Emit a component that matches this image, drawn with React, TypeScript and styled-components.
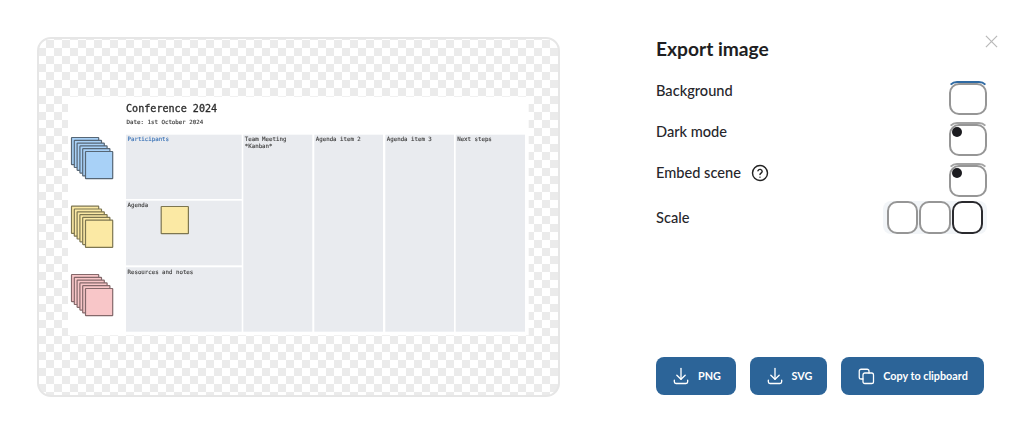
import React from "react";
import styled, { createGlobalStyle } from "styled-components";

const Global = createGlobalStyle`
  html, body { margin: 0; padding: 0; background: #fff; }
  body { font-family: "Lato", "Noto Sans", sans-serif; color: #1b1b1f; }
`;

const Page = styled.div`
  position: relative;
  box-sizing: border-box;
  width: 1024px;
  height: 434px;
  padding: 37px 37px 37px 37px;
  display: flex;
  gap: 96px;
  overflow: hidden;
`;

const Preview = styled.div`
  box-sizing: border-box;
  flex: 0 0 523px;
  height: 360px;
  border: 2px solid #e6e6e6;
  border-radius: 14px;
  overflow: hidden;
  background-color: #fff;
  background-image: conic-gradient(#ebebeb 25%, #fff 25% 50%, #ebebeb 50% 75%, #fff 75%);
  background-size: 16px 16px;
  background-position: -1px 1px;
`;

const Drawing = styled.svg`
  display: block;
  filter: blur(0.4px);
`;

const Panel = styled.section`
  flex: 1;
  display: flex;
  flex-direction: column;
`;

const Title = styled.h2`
  margin: -1px 0 0;
  font-size: 19.2px;
  line-height: 25px;
  font-weight: 700;
  color: #1e1e22;
`;

const Close = styled.button`
  position: absolute;
  top: 35px;
  right: 26px;
  padding: 0;
  border: 0;
  background: none;
  display: flex;
`;

const Options = styled.div`
  display: flex;
  flex-direction: column;
  margin-top: 12px;
  gap: 6px;
`;

const Row = styled.div`
  height: 35px;
  display: flex;
  align-items: center;
  justify-content: space-between;
`;

const ScaleRow = styled(Row)`
  margin-top: 4px;
`;

const Label = styled.span`
  display: flex;
  align-items: center;
  gap: 10px;
  font-size: 14.6px;
  font-weight: 500;
  color: #26262b;
`;

const Toggle = styled.div<{ $on?: boolean }>`
  position: relative;
  box-sizing: border-box;
  width: 38px;
  height: 32px;
  margin-top: 17px;
  border: 2px solid #969696;
  border-radius: 10px;
  background: #fff;

  &::before {
    content: "";
    position: absolute;
    left: -4px;
    right: -4px;
    top: -4px;
    height: 14px;
    border: 2px solid transparent;
    border-top-color: ${(p) => (p.$on ? "#2f6aa3" : "#a3a3a3")};
    border-radius: 10px 10px 0 0;
    box-sizing: border-box;
  }
`;

const Knob = styled.span`
  position: absolute;
  left: 1px;
  top: 1px;
  width: 10px;
  height: 10px;
  border-radius: 50%;
  background: #1b1b1f;
`;

const ScaleGroup = styled.div`
  display: flex;
  gap: 1px;
  padding: 0 4px;
  border-radius: 8px;
  background: #f2f5f8;
`;

const ScaleButton = styled.div<{ $active?: boolean }>`
  box-sizing: border-box;
  width: 31.5px;
  height: 33px;
  border: 2px solid ${(p) => (p.$active ? "#2a2a2e" : "#969696")};
  border-radius: 10px;
  background: #fff;
`;

const Actions = styled.div`
  margin-top: auto;
  padding-bottom: 2.5px;
  display: flex;
  gap: 14px;
`;

const Action = styled.button<{ $w: number; $gap: number }>`
  box-sizing: border-box;
  width: ${(p) => p.$w}px;
  height: 37.5px;
  padding: 0;
  display: flex;
  align-items: center;
  justify-content: center;
  gap: ${(p) => p.$gap}px;
  border: 0;
  border-radius: 8px;
  background: #2c6498;
  color: #fff;
  font-family: inherit;
  font-size: 10.8px;
  font-weight: 700;
`;

const Download = () => (
  <svg width="20" height="20" viewBox="0 0 24 24" fill="none" stroke="#fff" strokeWidth="1.6" strokeLinecap="round" strokeLinejoin="round">
    <path d="M4 17v2a2 2 0 0 0 2 2h12a2 2 0 0 0 2-2v-2" />
    <path d="M7 11l5 5 5-5" />
    <path d="M12 3v13" />
  </svg>
);

const Copy = () => (
  <svg width="18" height="18" viewBox="0 0 24 24" fill="none" stroke="#fff" strokeWidth="1.7" strokeLinecap="round" strokeLinejoin="round">
    <rect x="8" y="8" width="14" height="14" rx="2.5" />
    <path d="M16 8V5.500A2.500 2.500 0 0 0 13.500 3h-8A2.500 2.500 0 0 0 3 5.500v8A2.500 2.500 0 0 0 5.500 16H8" />
  </svg>
);

const Help = () => (
  <svg width="18" height="18" viewBox="0 0 24 24" fill="none" stroke="#222" strokeWidth="1.900" strokeLinecap="round" strokeLinejoin="round">
    <circle cx="12" cy="12" r="10" />
    <path d="M9.300 9a2.900 2.900 0 0 1 5.600 1c0 1.900-2.900 2.400-2.900 4" />
    <path d="M12 17.500v.01" />
  </svg>
);

const X = () => (
  <svg width="13" height="13" viewBox="0 0 14 14" fill="none" stroke="#b9b9b9" strokeWidth="1.300">
    <path d="M1 1l12 12M13 1L1 13" />
  </svg>
);

const stackOffsets = [0, 1, 2, 3, 4, 5];

const Stack = ({ x, y, fill, stroke }: { x: number; y: number; fill: string; stroke: string }) => (
  <g>
    {stackOffsets.map((i) => (
      <rect key={i} x={x + i * 2.8} y={y + i * 2.8} width="27.200" height="27.200" rx="0.500" fill={fill} stroke={stroke} strokeWidth="1.200" />
    ))}
  </g>
);

const panels = [
  { x: 87.5, y: 96.2, w: 115.7, h: 64.3, label: "Participants", color: "#3f76b8" },
  { x: 87.5, y: 162.2, w: 115.7, h: 64.6, label: "Agenda" },
  { x: 87.5, y: 228.8, w: 115.7, h: 64.4, label: "Resources and notes" },
  { x: 204.8, y: 96.2, w: 69, h: 197, label: "Team Meeting", second: "*Kanban*" },
  { x: 275.8, y: 96.2, w: 68.7, h: 197, label: "Agenda item 2" },
  { x: 346.8, y: 96.2, w: 68.7, h: 197, label: "Agenda item 3" },
  { x: 417.2, y: 96.2, w: 69.3, h: 197, label: "Next steps" },
];

const SceneText = styled.text<{ $size: number; $ink: number }>`
  font-family: "DejaVu Sans Mono", "Liberation Mono", monospace;
  font-size: ${(p) => p.$size}px;
  stroke: currentColor;
  stroke-width: ${(p) => p.$ink}px;
`;

export default function App() {
  return (
    <Page>
      <Global />
      <Preview>
        <Drawing width="519" height="356" viewBox="0.5 0.5 519 356">
          <rect x="29.5" y="58.2" width="460.7" height="238.6" fill="#fff" />
          {panels.map((p) => (
            <g key={p.label}>
              <rect x={p.x} y={p.y} width={p.w} height={p.h} fill="#e9ebef" />
              <SceneText $size={5.75} $ink={0.15} x={p.x + 1.5} y={p.y + 6.5} fill={p.color ?? "#444"} color={p.color ?? "#444"}>{p.label}</SceneText>
              {p.second && (
                <SceneText $size={5.75} $ink={0.15} x={p.x + 1.5} y={p.y + 13.5} fill="#444" color="#444">{p.second}</SceneText>
              )}
            </g>
          ))}
          <SceneText $size={10.1} $ink={0.3} x="87.5" y="73" fill="#2b2b2b" color="#2b2b2b">Conference 2024</SceneText>
          <SceneText $size={5.8} $ink={0.15} x="88" y="85.5" fill="#3a3a3a" color="#3a3a3a">Date: 1st October 2024</SceneText>
          <Stack x={33} y={99} fill="#a8d1f7" stroke="#566675" />
          <Stack x={33} y={167.7} fill="#fbe9a4" stroke="#7d7650" />
          <Stack x={33} y={236} fill="#f8c6c8" stroke="#84686a" />
          <rect x="122.7" y="168" width="27.2" height="27.2" rx="0.5" fill="#fbe9a4" stroke="#7d7650" strokeWidth="1.2" />
        </Drawing>
      </Preview>
      <Panel>
        <Title>Export image</Title>
        <Options>
          <Row>
            <Label>Background</Label>
            <Toggle $on />
          </Row>
          <Row>
            <Label>Dark mode</Label>
            <Toggle><Knob /></Toggle>
          </Row>
          <Row>
            <Label>Embed scene <Help /></Label>
            <Toggle><Knob /></Toggle>
          </Row>
          <ScaleRow>
            <Label>Scale</Label>
            <ScaleGroup>
              <ScaleButton />
              <ScaleButton />
              <ScaleButton $active />
            </ScaleGroup>
          </ScaleRow>
        </Options>
        <Actions>
          <Action $w={80} $gap={7}><Download />PNG</Action>
          <Action $w={77} $gap={7}><Download />SVG</Action>
          <Action $w={143} $gap={8}><Copy />Copy to clipboard</Action>
        </Actions>
      </Panel>
      <Close aria-label="Close"><X /></Close>
    </Page>
  );
}
